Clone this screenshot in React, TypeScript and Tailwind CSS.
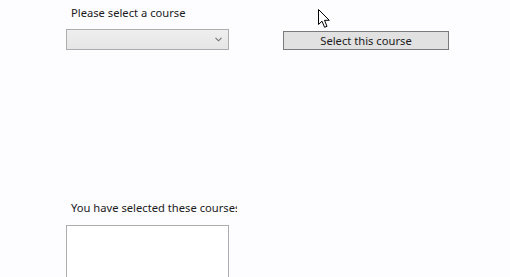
import React from "react";

const font = { fontFamily: '"Segoe UI", "Noto Sans", "Open Sans", sans-serif' };

const Cursor = () => (
  <svg className="absolute left-[318px] top-[9px]" width="14" height="20" viewBox="0 0 14 20">
    <path d="M0.5 0.5 L0.5 15.5 L4 12.2 L6.6 18.3 L9 17.3 L6.5 11.3 L11.3 11.3 Z" fill="#fff" stroke="#000" strokeWidth="1" strokeLinejoin="round" />
  </svg>
);

export default function App() {
  return (
    <div className="relative w-[510px] h-[277px] overflow-hidden bg-[#fdfcfe] text-[11.2px] text-[#1b1b1b]" style={font}>
      <div className="flex flex-col pl-[66px] pt-[5px]">
        <div className="pl-[5px] h-[16px] leading-[16px]">Please select a course</div>
        <div className="flex items-start mt-[8px]">
          <div className="w-[163px] h-[21px] border border-[#adadad] bg-gradient-to-b from-[#efefef] to-[#e5e5e5] flex items-center justify-end pr-[6px]">
            <svg width="7" height="5" viewBox="0 0 7 5">
              <path d="M0.5 0.8 L3.5 3.8 L6.5 0.8" fill="none" stroke="#707070" strokeWidth="1.1" />
            </svg>
          </div>
          <button className="ml-[54px] mt-[2px] w-[166px] h-[19px] border border-[#7a7a7a] bg-[#e1e1e1] text-[11.2px] leading-[17px] text-[#1b1b1b]">
            Select this course
          </button>
        </div>
        <div className="mt-[150px] pl-[5px] w-[171px] overflow-hidden whitespace-nowrap h-[16px] leading-[16px]">
          You have selected these courses:
        </div>
        <div className="mt-[9px] w-[163px] h-[60px] border border-[#adadad] bg-white"></div>
      </div>
      <Cursor />
    </div>
  );
}
